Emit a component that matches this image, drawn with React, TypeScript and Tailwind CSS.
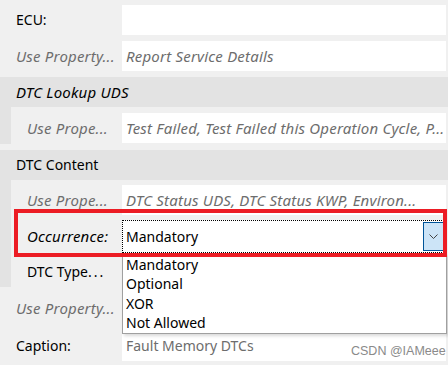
import React from 'react'

const font = { fontFamily: '"Noto Sans", "Open Sans", sans-serif' }

// Segoe UI italic runs wider than Noto Sans italic, so widen it a little
const it = 'italic text-[15px] tracking-[0.2px]'
const gray = 'text-[#6d6d6d]'

function Field({ children, className = '' }: { children?: React.ReactNode; className?: string }) {
  return (
    <div className={`flex h-[30px] flex-1 items-center overflow-hidden whitespace-nowrap bg-white pl-1 ${className}`}>
      {children}
    </div>
  )
}

function Row({ label, value, labelClass = '', valueClass = '', inner = false, rowClass = 'pt-[5px] h-[36px]' }: {
  label: React.ReactNode
  value?: string
  labelClass?: string
  valueClass?: string
  inner?: boolean
  rowClass?: string
}) {
  return (
    <div className={`flex items-start pr-[2px] pl-4 ${rowClass}`}>
      <div className={`flex h-[30px] shrink-0 items-center whitespace-nowrap ${inner ? 'w-[95px]' : 'w-[106px]'} ${labelClass}`}>
        {label}
      </div>
      <Field className={valueClass}>{value}</Field>
    </div>
  )
}

export default function App() {
  return (
    <div className="relative h-[365px] w-[448px] overflow-hidden bg-[#f0f0f0] text-[14px] leading-none text-black" style={font}>
      <Row label="ECU:" />
      <Row label="Use Property..." value="Report Service Details" labelClass={`${it} ${gray}`} valueClass={`${it} ${gray}`} />

      {/* DTC Lookup UDS group */}
      <div className="mt-[5px] bg-[#e3e3e3]">
        <div className={`flex h-[30px] items-center pl-4 ${it}`}>DTC Lookup UDS</div>
        <div className="ml-[11px] bg-[#f0f0f0]">
          <Row
            inner
            rowClass="pt-[6px] pb-[1px] h-[37px]"
            label="Use Prope..."
            value="Test Failed, Test Failed this Operation Cycle, P..."
            labelClass={`${it} ${gray}`}
            valueClass={`${it} ${gray}`}
          />
        </div>
      </div>

      {/* DTC Content group */}
      <div className="mt-[6px] bg-[#e3e3e3]">
        <div className="flex h-[30px] items-center pl-4">DTC Content</div>
        <div className="ml-[11px] bg-[#f0f0f0]">
          <Row
            inner
            rowClass="pt-[5px] h-[35px]"
            label="Use Prope..."
            value="DTC Status UDS, DTC Status KWP, Environ..."
            labelClass={`${it} ${gray}`}
            valueClass={`${it} ${gray}`}
          />
          <div className="flex h-[38px] items-end pr-[2px] pl-4">
            <div className={`flex h-[33px] w-[95px] shrink-0 items-center ${it}`}>Occurrence:</div>
            <div className="flex h-[33px] flex-1 items-center justify-between border border-dotted border-black bg-white pl-[3px] pr-px">
              <span>Mandatory</span>
              <div className="flex h-[29px] w-[21px] items-center justify-center border border-[#005499] bg-[#cce4f7]">
                <svg width="9" height="5" viewBox="0 0 9 5" fill="none">
                  <path d="M0.5 0.5 L4.5 4.5 L8.5 0.5" stroke="#444" strokeWidth="1" />
                </svg>
              </div>
            </div>
          </div>
          <div className="flex h-[34px] items-center pl-4 pt-[4px]">
            DTC Type<span className="tracking-[2px]">...</span>
          </div>
        </div>
      </div>

      <Row rowClass="pt-[6px] h-[40px]" label="Use Property..." labelClass={`${it} ${gray}`} />
      <Row rowClass="pt-[4px] h-[38px]" label="Caption:" value="Fault Memory DTCs" valueClass={gray} />

      {/* dropdown list */}
      <div className="absolute left-[122px] top-[254px] flex h-[80px] w-[325px] flex-col border border-[#a0a0a0] bg-white pl-[3px] shadow-[2px_2px_3px_rgba(0,0,0,0.15)]">
        <div className="flex h-[20px] items-center">Mandatory</div>
        <div className="flex h-[20px] items-center">Optional</div>
        <div className="flex h-[20px] items-center">XOR</div>
        <div className="flex h-[20px] items-center">Not Allowed</div>
      </div>

      {/* highlight frame */}
      <div className="pointer-events-none absolute left-[14px] top-[209px] h-[48px] w-[433px] border-4 border-[#ec1c24]" />

      {/* watermark */}
      <div className="absolute left-[351px] top-[345px] text-[12.5px] leading-none text-[#8a8a8a]" style={{ fontFamily: '"Liberation Sans", sans-serif' }}>
        CSDN @IAMeee
      </div>
    </div>
  )
}
